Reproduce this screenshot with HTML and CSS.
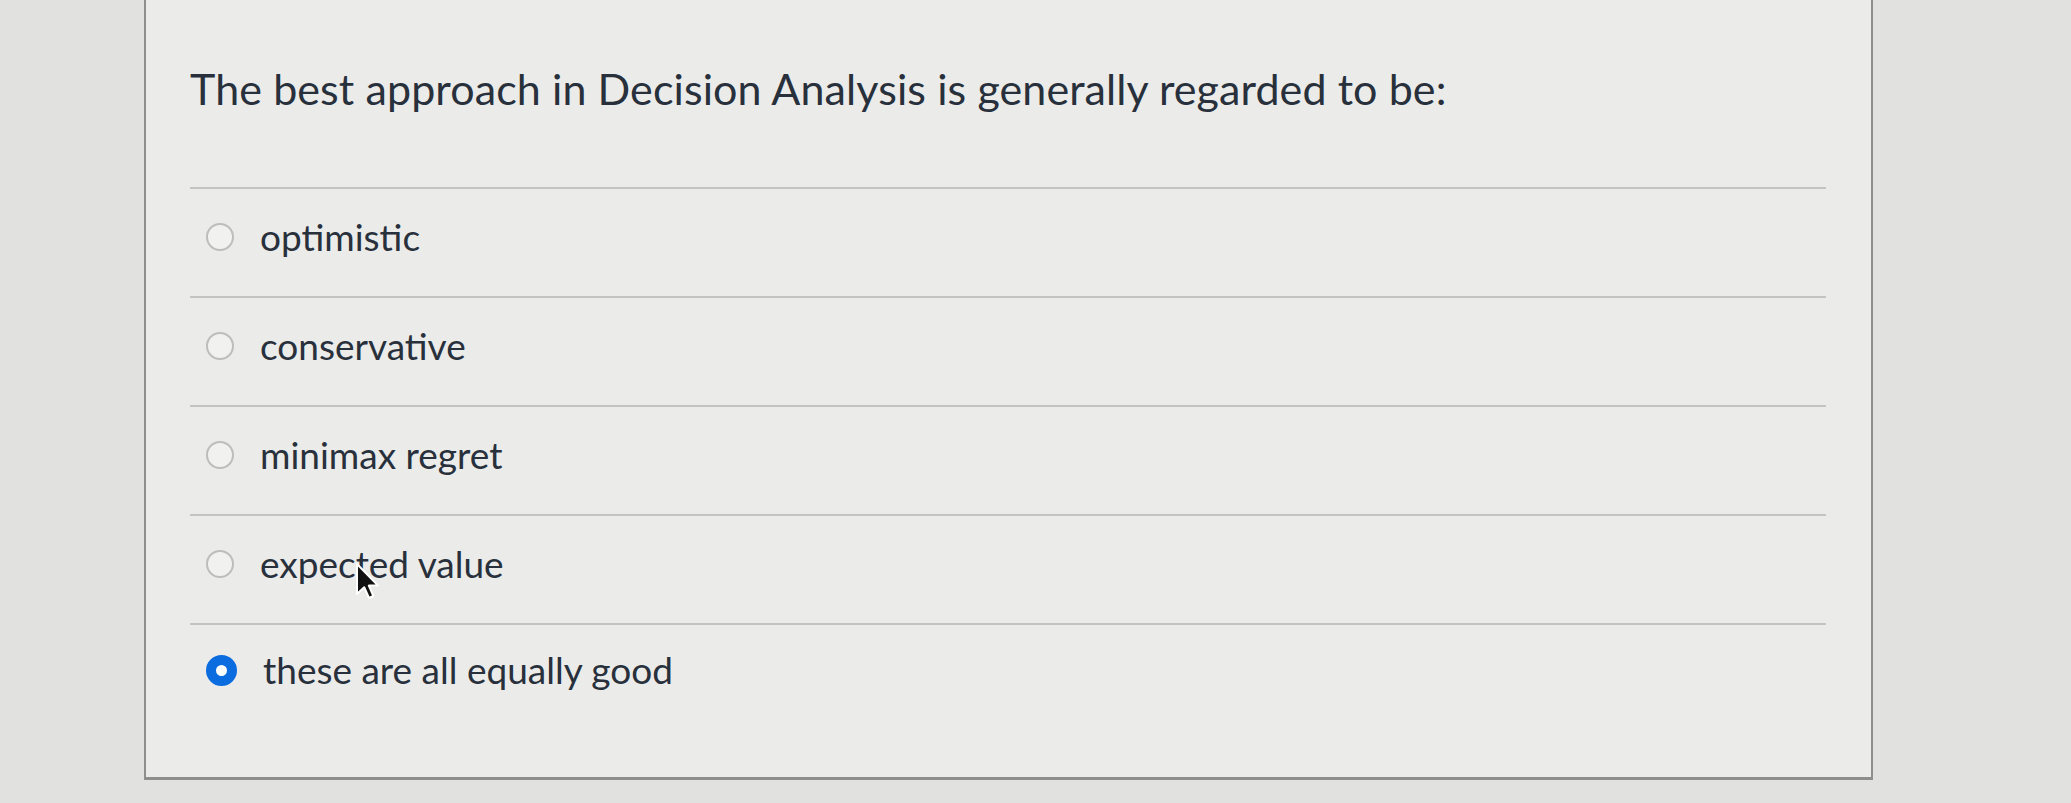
FILE: index.html
```html
<!DOCTYPE html>
<html lang="en">
<head>
<meta charset="utf-8">
<title>Quiz question</title>
<link rel="stylesheet" href="styles.css">
</head>
<body>
<div class="screen">
  <div class="panel">
    <h1 class="question">The best approach in Decision Analysis is generally regarded to be:</h1>
    <div class="answers">
      <div class="answer"><span class="radio"></span><span class="label">optimistic</span></div>
      <div class="answer"><span class="radio"></span><span class="label">conservative</span></div>
      <div class="answer"><span class="radio"></span><span class="label">minimax regret</span></div>
      <div class="answer"><span class="radio"></span><span class="label">expected value</span></div>
      <div class="answer last"><span class="radio checked"></span><span class="label">these are all equally good</span></div>
    </div>
  </div>
  <svg class="cursor" width="24" height="38" viewBox="0 0 12 19" aria-hidden="true">
    <path d="M1 1 L1 16 L4.6 12.6 L7 18 L9.2 17 L6.9 11.8 L11.5 11.8 Z" fill="#111" stroke="#fff" stroke-width="1" stroke-linejoin="round"/>
  </svg>
</div>
</body>
</html>
```
FILE: styles.css
```css
html, body {
  margin: 0;
  padding: 0;
}
body {
  background: #e1e1df;
  font-family: Lato, "Open Sans", "Liberation Sans", sans-serif;
  color: #2d3b45;
  width: 2071px;
  height: 803px;
  overflow: hidden;
}
.screen {
  position: relative;
  width: 2071px;
  height: 803px;
}
.panel {
  margin-left: 144px;
  width: 1729px;
  height: 780px;
  box-sizing: border-box;
  background: #ebebe9;
  border-left: 2px solid #8e8e8e;
  border-right: 2px solid #8e8e8e;
  border-bottom: 3px solid #8e8e8e;
  padding: 64px 0 0 44px;
}
.question {
  margin: 0;
  font-size: 43px;
  line-height: 50px;
  font-weight: 400;
  color: #28303c;
  letter-spacing: 0.1px;
}
.answers {
  margin-top: 73px;
  width: 1636px;
}
.answer {
  display: flex;
  align-items: center;
  height: 95px;
  border-top: 2px solid #c3c3c3;
  padding-left: 16px;
  padding-bottom: 12px;
  box-sizing: content-box;
}
.answer.last {
  height: 90px;
}
.radio {
  width: 24px;
  height: 24px;
  border: 2px solid #bdbdbd;
  border-radius: 50%;
  background: #f1f1f0;
  flex: none;
}
.radio.checked {
  width: 11px;
  height: 11px;
  border: 10px solid #0b6ce0;
  background: #ffffff;
}
.label {
  margin-left: 26px;
  font-size: 37px;
  line-height: 44px;
  color: #28303c;
}
.cursor {
  position: absolute;
  left: 355px;
  top: 562px;
}
```
